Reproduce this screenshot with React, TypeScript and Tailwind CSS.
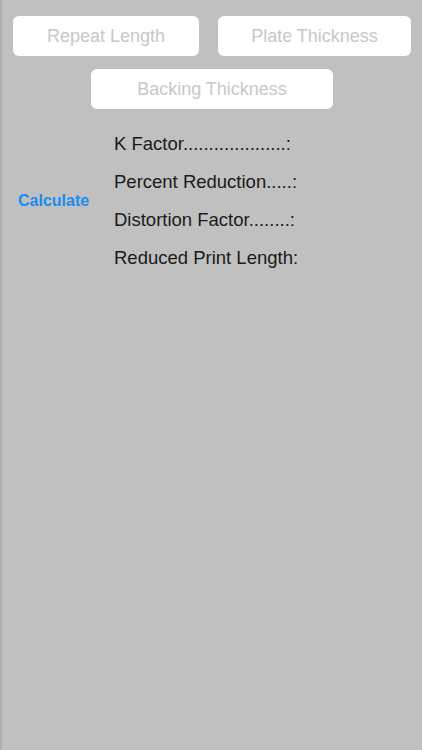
import React from 'react'

const font = { fontFamily: '"Liberation Sans", Arial, sans-serif' }

export default function App() {
  const labels = [
    'K Factor....................:',
    'Percent Reduction.....:',
    'Distortion Factor........:',
    'Reduced Print Length:',
  ]

  return (
    <div className="w-[422px] h-[750px] bg-[#c0c0c0] border-l-2 border-[#b0b0b0] overflow-hidden" style={font}>
      <div className="flex gap-[19px] pt-4 pl-[11px]">
        <button className="w-[186px] h-10 bg-white rounded-[6px] text-[18px] text-[#c7c7cc]">
          Repeat Length
        </button>
        <button className="w-[193px] h-10 bg-white rounded-[6px] text-[18px] text-[#c7c7cc]">
          Plate Thickness
        </button>
      </div>
      <div className="pl-[89px] mt-[13px]">
        <button className="w-[242px] h-10 bg-white rounded-[6px] text-[18px] text-[#c7c7cc]">
          Backing Thickness
        </button>
      </div>

      <div className="flex items-center mt-4">
        <div className="w-[112px] pl-4 shrink-0">
          <button className="text-[16px] font-bold text-[#1b8cf2]">Calculate</button>
        </div>
        <div className="flex flex-col">
          {labels.map(l => (
            <div key={l} className="h-[38px] flex items-center text-[18.5px] text-[#1a1a1a]">
              {l}
            </div>
          ))}
        </div>
      </div>
    </div>
  )
}
